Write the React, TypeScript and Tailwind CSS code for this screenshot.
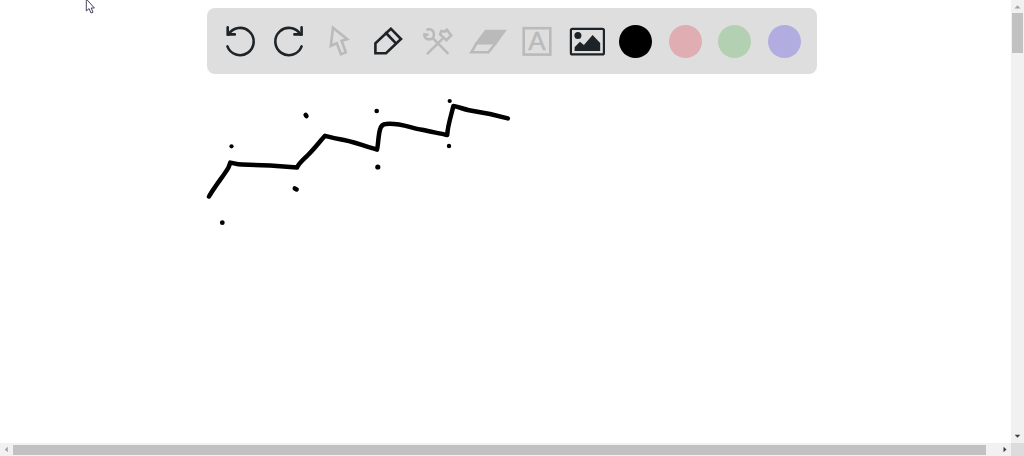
import React, { useState } from "react";

type Tool = { name: string; disabled?: boolean; icon: React.ReactNode };

const tools: Tool[] = [
  {
    name: "Undo",
    icon: (
      <>
        <path d="M7.4 25.4A13.6 13.6 0 1 0 8.4 13.6" />
        <path d="M7.7 6.4V13.4H14.8" />
      </>
    ),
  },
  {
    name: "Redo",
    icon: (
      <>
        <path d="M32.6 25.4A13.6 13.6 0 1 1 31.6 13.6" />
        <path d="M32.6 6.4V13.4H25.4" />
      </>
    ),
  },
  {
    name: "Select",
    disabled: true,
    icon: <path d="M14 6.8L28.2 18.2L22.6 19.8L26.8 31.4L22 33.4L17.8 22.2L11.8 24.8Z" />,
  },
  {
    name: "Pen",
    icon: (
      <>
        <path d="M22.8 7.7L33 18L18 32.2H7.4V22.2Z" />
        <path d="M18 12L28 22.4" />
      </>
    ),
  },
  {
    name: "Tools",
    disabled: true,
    icon: (
      <>
        <path d="M9.4 8.6C12.8 7.4 16 9.8 16 13.2C16 16.4 13.6 18.4 11 18.4C8.2 18.4 6 16.2 6.4 13.4L9.4 13.6" />
        <path d="M14.8 17.2L29.6 32.2M9.8 32.4L24.4 17.8" />
        <path d="M23.4 10L26.8 10.6L28.8 8.6L33.2 14.4L28.4 19.2L22.2 13.4Z" />
      </>
    ),
  },
  {
    name: "Eraser",
    disabled: true,
    icon: (
      <>
        <path d="M18.8 10H37.4L28.6 22.3H9.6Z" fill="currentColor" />
        <path d="M9.6 22.3L4.4 31.2H21.4L28.6 22.3" />
      </>
    ),
  },
  {
    name: "Text",
    disabled: true,
    icon: (
      <>
        <rect x="6.7" y="7.2" width="26.6" height="26.4" />
        <text
          x="20"
          y="29"
          textAnchor="middle"
          fill="currentColor"
          strokeWidth="0.4"
          className="font-['Liberation_Sans',Arial,sans-serif] text-[26px]"
        >
          A
        </text>
      </>
    ),
  },
  {
    name: "Image",
    icon: (
      <>
        <rect x="4.9" y="7.8" width="33" height="25.6" rx="1.5" strokeWidth="2.2" />
        <circle cx="11.9" cy="14.4" r="3.5" fill="currentColor" stroke="none" />
        <path
          d="M8.6 29.9V26.3L13.9 20.8L17.9 24L26.6 14L34.2 22V29.9Z"
          fill="currentColor"
          stroke="none"
        />
      </>
    ),
  },
];

const colors = [
  { name: "Black", className: "bg-black" },
  { name: "Red", className: "bg-[#e0adb2]" },
  { name: "Green", className: "bg-[#b3d0b2]" },
  { name: "Purple", className: "bg-[#b2ade0]" },
];

function Toolbar() {
  const [color, setColor] = useState("Black");
  return (
    <div
      role="toolbar"
      aria-label="Drawing tools"
      className="absolute inset-x-0 top-2 mx-auto grid h-[66px] w-full max-w-[610px] grid-cols-12 items-center justify-items-center rounded-lg bg-[#dedede] px-2"
    >
      {tools.map((tool) => (
        <button
          key={tool.name}
          type="button"
          aria-label={tool.name}
          disabled={tool.disabled}
          className="text-[#1d2327] disabled:text-[#bababa]"
        >
          <svg
            viewBox="0 0 40 40"
            className="size-10"
            fill="none"
            stroke="currentColor"
            strokeWidth="2.6"
            strokeLinecap="round"
            strokeLinejoin="miter"
          >
            {tool.icon}
          </svg>
        </button>
      ))}
      {colors.map((c) => (
        <button
          key={c.name}
          type="button"
          aria-label={c.name}
          aria-pressed={color === c.name}
          onClick={() => setColor(c.name)}
          className={`size-[33px] rounded-full ${c.className}`}
        />
      ))}
    </div>
  );
}

const dots = [
  [231.5, 146.3, 2.1],
  [222.3, 222.7, 2.4],
  [376.7, 111, 2.3],
  [377.8, 167, 2.6],
  [449.7, 101, 2.1],
  [449, 146, 2.2],
];

function Drawing() {
  return (
    <svg className="size-full" role="img" aria-label="Zigzag sketch">
      <g fill="none" stroke="#000" strokeLinecap="round" strokeLinejoin="round">
        <path
          strokeWidth="4.5"
          d="M209 196.5C215 186 225 174 228.5 167.5L230.3 162.6C234 163.2 237 164.4 242 164.6L270 165.4L297 167.6C299 163 303 160 308 155C315 148 321 140 325 135.8C330 137.2 334 138.5 340 139.3C351 140.7 362 145.5 377 149.6C378.6 143 378 136 380.2 129C381.2 125.5 383 124.2 386 124C399 122.6 409 127.4 422 129.8C431 131.8 439 133.2 447.2 135C447.6 126 451 116 453.4 106C458 106.6 463 109 469 110.2L490 114L507.8 118.4"
        />
        <path strokeWidth="4.6" d="M305.7 115L306.4 116M294.8 188.4L296.6 189.4" />
      </g>
      {dots.map(([cx, cy, r]) => (
        <circle key={`${cx}-${cy}`} cx={cx} cy={cy} r={r} />
      ))}
    </svg>
  );
}

function Arrow({ d, className }: { d: string; className: string }) {
  return (
    <svg viewBox="0 0 13 13" className={`size-[13px] shrink-0 ${className}`} fill="currentColor">
      <path d={d} />
    </svg>
  );
}

export default function App() {
  return (
    <div className="relative flex h-screen flex-col overflow-hidden bg-white">
      <div className="flex min-h-0 flex-1">
        <main className="min-w-0 flex-1">
          <Drawing />
        </main>
        <div className="flex w-[13px] flex-col items-center bg-[#f1f1f1]">
          <Arrow className="text-[#a3a3a3]" d="M3.5 8.5L6.5 5.3L9.5 8.5Z" />
          <div className="min-h-0 w-full flex-1 px-px">
            <div className="h-10 bg-[#c1c1c1]" />
          </div>
          <Arrow className="text-[#404040]" d="M3.7 4.8H9.3L6.5 7.8Z" />
        </div>
      </div>
      <div className="flex h-[13px]">
        <div className="flex min-w-0 flex-1 items-center bg-[#f1f1f1]">
          <Arrow className="text-[#a3a3a3]" d="M7.8 3.7V9.3L4.8 6.5Z" />
          <div className="min-w-0 flex-1 pr-3">
            <div className="h-[10px] bg-[#c1c1c1]" />
          </div>
          <Arrow className="text-[#404040]" d="M5.5 3.7V9.3L8.5 6.5Z" />
        </div>
        <div className="w-[13px] bg-[#dcdcdc]" />
      </div>
      <Toolbar />
      <svg viewBox="0 0 12 16" className="absolute top-0 left-[85px] h-4 w-3" aria-hidden="true">
        <path
          d="M1.3 -1V11L4.1 8.6L6 13L8 12.2L6.2 8H9.4Z"
          fill="#fff"
          stroke="#45455f"
          strokeWidth="1"
        />
      </svg>
    </div>
  );
}
